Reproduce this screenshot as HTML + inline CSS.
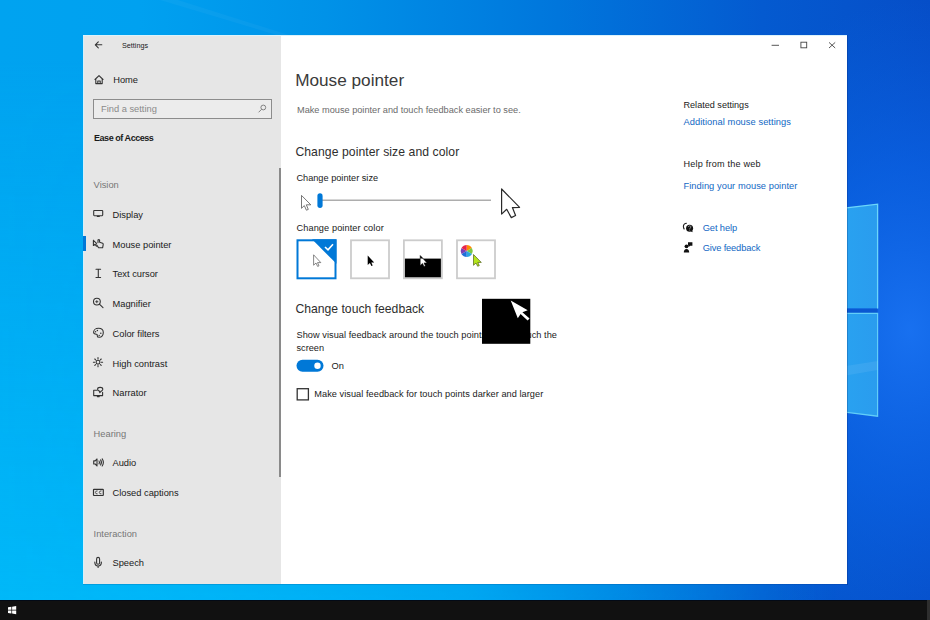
<!DOCTYPE html>
<html><head><meta charset="utf-8">
<style>
*{margin:0;padding:0;box-sizing:border-box}
html,body{width:930px;height:620px;overflow:hidden}
body{position:relative;font-family:"Liberation Sans",sans-serif;background:#0a6ad8}
#bg{position:absolute;left:0;top:0;width:930px;height:600px}
#taskbar{position:absolute;left:0;top:600px;width:930px;height:20px;background:#111111}
#win{position:absolute;left:83px;top:35px;width:764px;height:549px;background:#fff;overflow:hidden}
#nav{position:absolute;left:0;top:0;width:198.4px;height:549px;background:#e6e6e6}
.t{position:absolute;white-space:nowrap;line-height:1;font-size:9.3px;color:#1a1a1a}
.g{color:#767676}
.lk{color:#1268c4}
svg{position:absolute;overflow:visible}
</style></head><body>
<svg id="bg" width="930" height="600" viewBox="0 0 930 600">
 <defs>
  <linearGradient id="gh" x1="0" y1="0" x2="1" y2="0">
   <stop offset="0" stop-color="#00a3f0"/>
   <stop offset="0.15" stop-color="#00a1f0"/>
   <stop offset="0.35" stop-color="#0092e8"/>
   <stop offset="0.6" stop-color="#0076dc"/>
   <stop offset="0.82" stop-color="#045ad0"/>
   <stop offset="1" stop-color="#064ec8"/>
  </linearGradient>
  <linearGradient id="gv" x1="0" y1="0" x2="0" y2="1">
   <stop offset="0.1" stop-color="#00b8f8" stop-opacity="0"/>
   <stop offset="1" stop-color="#00b8f8" stop-opacity="1"/>
  </linearGradient>
  <linearGradient id="gvm" x1="0" y1="0" x2="1" y2="0">
   <stop offset="0" stop-color="#fff"/>
   <stop offset="0.5" stop-color="#fff" stop-opacity="0.7"/>
   <stop offset="0.75" stop-color="#fff" stop-opacity="0.25"/>
   <stop offset="0.9" stop-color="#fff" stop-opacity="0"/>
  </linearGradient>
  <mask id="mk"><rect width="930" height="600" fill="url(#gvm)"/></mask>
  <radialGradient id="glow" cx="0" cy="0" r="1" gradientUnits="userSpaceOnUse" gradientTransform="translate(910 330) scale(230 330)">
   <stop offset="0" stop-color="#1a74f4" stop-opacity="0.9"/>
   <stop offset="0.5" stop-color="#0c66ea" stop-opacity="0.6"/>
   <stop offset="1" stop-color="#0a60e0" stop-opacity="0"/>
  </radialGradient>
  <linearGradient id="pane" x1="0" y1="0" x2="1" y2="0">
   <stop offset="0" stop-color="#28a6f2"/>
   <stop offset="1" stop-color="#2a9cee"/>
  </linearGradient>
 </defs>
 <rect width="930" height="600" fill="url(#gh)"/>
 <rect width="930" height="600" fill="url(#gv)" mask="url(#mk)"/>
 <rect width="930" height="600" fill="url(#glow)"/>
 <path d="M160 0 L280 36 L292 36 L178 0 Z" fill="#fff" opacity="0.035"/>
 <path d="M820 211 L877.6 204.2 V308.4 H820 Z" fill="url(#pane)"/>
 <path d="M820 313.4 H877.6 V416.2 L820 409 Z" fill="url(#pane)"/>
 <rect x="820" y="308.6" width="57.6" height="4.6" fill="#0a58d2"/>
 <path d="M820 211 L877.6 204.2 V308.4" fill="none" stroke="#6cd6fa" stroke-width="1.3"/>
 <path d="M820 313.4 H877.6 V416.2 L820 409" fill="none" stroke="#62cef8" stroke-width="1.2"/>
 <path d="M820 370 L877.6 361 V370 L820 380 Z" fill="#fff" opacity="0.07"/>
</svg>
<div id="taskbar"><div style="position:absolute;left:0;top:0;width:930px;height:1px;background:#030a16"></div><div style="position:absolute;left:927px;top:0;width:3px;height:20px;background:#2e2e2e"></div></div>
<div id="win">
 <div id="nav"></div>
 <div style="position:absolute;left:0;top:0;width:1px;height:549px;background:#d4f0fb"></div>
 <div style="position:absolute;left:0;top:0;width:764px;height:1px;background:#dcf3fb"></div>
</div>
<div style="position:absolute;left:847px;top:35px;width:1px;height:550px;background:rgba(0,20,80,0.22)"></div>
<div style="position:absolute;left:83px;top:584px;width:765px;height:1px;background:rgba(0,30,90,0.15)"></div>
<!-- NAV -->
<div class="t" style="left:122px;top:41.5px;font-size:7.2px">Settings</div>
<div class="t" style="left:113.2px;top:76.1px">Home</div>
<div style="position:absolute;left:93px;top:99px;width:178.8px;height:20px;border:1.6px solid #8c8c8c;background:#ececec"></div>
<div class="t" style="left:101px;top:105.1px;color:#8a8a8a">Find a setting</div>
<div class="t" style="left:94px;top:134.1px;font-weight:bold;font-size:9px;letter-spacing:-0.45px">Ease of Access</div>
<div class="t g" style="left:93.6px;top:181.1px">Vision</div>
<div class="t" style="left:112.5px;top:210.9px">Display</div>
<div style="position:absolute;left:83px;top:236px;width:3px;height:15px;background:#0078d7"></div>
<div class="t" style="left:112.5px;top:240.9px">Mouse pointer</div>
<div class="t" style="left:112.5px;top:270.4px">Text cursor</div>
<div class="t" style="left:112.5px;top:300.1px">Magnifier</div>
<div class="t" style="left:112.5px;top:329.8px">Color filters</div>
<div class="t" style="left:112.5px;top:359.5px">High contrast</div>
<div class="t" style="left:112.5px;top:388.9px">Narrator</div>
<div class="t g" style="left:93.6px;top:430.1px">Hearing</div>
<div class="t" style="left:112.5px;top:459.2px">Audio</div>
<div class="t" style="left:112.5px;top:489.1px">Closed captions</div>
<div class="t g" style="left:93.6px;top:530.3px">Interaction</div>
<div class="t" style="left:112.5px;top:559.2px">Speech</div>
<div style="position:absolute;left:279px;top:168px;width:2px;height:309px;background:#8a8a8a"></div>


<!-- ICONS -->
<svg style="left:0;top:0" width="930" height="620" viewBox="0 0 930 620">
 <g fill="none" stroke="#333" stroke-width="1.1" stroke-linecap="round" stroke-linejoin="round">
  <!-- back arrow -->
  <path d="M95.3 44.8 H101.8 M95.3 44.8 L98.3 41.8 M95.3 44.8 L98.3 47.8"/>
  <!-- home -->
  <path d="M95 79.5 L99 75.6 L103 79.5 M95.8 78.8 V83.6 H102.2 V78.8 M97.8 83.6 V81 H100.2 V83.6"/>
  <!-- display -->
  <rect x="93.7" y="210.5" width="9" height="5.2" rx="0.6"/>
  <path d="M97.3 216.4 H99.3"/>
  <!-- mouse pointer (hand) -->
  <path d="M93.4 240.3 V245.5 L95.2 244.2 L96.4 246.2 M93.4 240.3 L96.6 243.4"/>
  <path d="M98 242.6 V240 Q98.9 239.2 99.6 240 V242.3 L102.6 243.2 Q103.4 243.6 103.2 244.6 L102.6 247.8 H98.6 L96.6 244.9"/>
  <!-- text cursor -->
  <path d="M96 269.3 H100.6 M98.3 269.3 V277.5 M96 277.5 H100.6"/>
  <!-- magnifier -->
  <circle cx="96.9" cy="301.6" r="3.4"/>
  <path d="M99.4 304.1 L103 307.6"/>
  <!-- color filters palette -->
  <path d="M98.5 328.3 C95.3 328.3 93.6 330.4 93.6 332.3 C93.6 334 95.3 334.2 96.3 334.2 C97.4 334.2 97.3 335.3 97.3 336 C97.3 337 98.3 337.3 99.2 337.3 C101.8 337.3 103.3 335 103.3 332.6 C103.3 330 101.3 328.3 98.5 328.3 Z"/>
  <!-- high contrast sun -->
  <circle cx="98" cy="362.2" r="1.9"/>
  <path d="M98 357.6 V358.9 M98 365.5 V366.8 M93.4 362.2 H94.7 M101.3 362.2 H102.6 M94.8 359 L95.6 359.8 M100.4 364.6 L101.2 365.4 M94.8 365.4 L95.6 364.6 M100.4 359.8 L101.2 359"/>
  <!-- narrator -->
  <path d="M96.8 390.3 H93.7 V395.6 H102.6 V392.3"/>
  <path d="M97.3 396.6 H99.3"/>
  <path d="M97.6 389.2 Q97.6 387.4 100.1 387.4 Q102.8 387.4 102.8 389.3 Q102.8 390.5 101.4 391 L99.8 392.6 L99.4 391 Q97.6 390.8 97.6 389.2 Z"/>
  <!-- audio -->
  <path d="M93.7 460.9 H95.2 L97 459 V465.9 L95.2 464 H93.7 Z"/>
  <path d="M99 461 Q100 462.4 99 463.9 M100.6 459.9 Q102.3 462.4 100.6 465 M102.2 458.9 Q104.6 462.4 102.2 466"/>
  <!-- speech mic -->
  <rect x="96.6" y="557.4" width="3" height="6.8" rx="1.5"/>
  <path d="M94.8 562 Q94.8 566 98.1 566 Q101.4 566 101.4 562 M98.1 566 V567.4"/>
 </g>
 <!-- closed captions -->
 <rect x="93.5" y="489.3" width="9.8" height="6.2" rx="0.5" fill="none" stroke="#333" stroke-width="1.2"/>
 <path d="M97.6 490.9 Q95.4 490.7 95.4 492.4 Q95.4 494.1 97.6 493.9 M101.5 490.9 Q99.3 490.7 99.3 492.4 Q99.3 494.1 101.5 493.9" fill="none" stroke="#444" stroke-width="0.9"/>
 <!-- palette dots -->
 <g fill="#333"><circle cx="97.4" cy="330.5" r="0.75"/><circle cx="95.6" cy="331.8" r="0.7"/><circle cx="100.8" cy="333.2" r="0.75"/><circle cx="99.2" cy="335.4" r="0.7"/></g>
 <!-- magnifier plus -->
 <path d="M95.3 301.7 H98.3 M96.8 300.2 V303.2" stroke="#333" stroke-width="0.9"/>
 <!-- display stand / narrator stand dots -->
 <!-- search icon -->
 <g fill="none" stroke="#777" stroke-width="0.9">
  <circle cx="263.3" cy="107.5" r="2.4"/>
  <path d="M261.6 109.3 L258.6 112.3"/>
 </g>
 <!-- title bar buttons -->
 <g fill="none" stroke="#444" stroke-width="0.9">
  <path d="M771.6 45.3 H779"/>
  <rect x="800.9" y="42.2" width="5.8" height="5.6"/>
  <path d="M829 42.4 L835.2 48 M835.2 42.4 L829 48"/>
 </g>
</svg>


<!-- WIDGETS -->
<svg style="left:0;top:0" width="930" height="620" viewBox="0 0 930 620">
 <!-- slider small cursor -->
 <path d="M301.5 195.4 V208.3 L304.3 205.6 L306.4 210.2 L308.3 209.4 L306.3 204.8 L310.8 204.8 Z" fill="#fff" stroke="#555" stroke-width="0.8" stroke-linejoin="round"/>
 <!-- slider track -->
 <rect x="322" y="199.6" width="169" height="1.2" fill="#999"/>
 <rect x="317.4" y="193.3" width="5.2" height="14.6" rx="2.6" fill="#0078d7"/>
 <!-- large cursor -->
 <path d="M501.6 189 V214.1 L506.7 209.3 L511.3 217.6 L515.6 215.5 L512.4 207.6 L519.6 207.3 Z" fill="#fff" stroke="#2a2a2a" stroke-width="1.2" stroke-linejoin="round"/>
 <!-- color boxes -->
 <rect x="297.5" y="240.3" width="38" height="38" fill="#fff" stroke="#0078d7" stroke-width="2"/>
 <path d="M312 239.3 H336.5 V263.8 Z" fill="#0078d7"/>
 <path d="M325 247 L328 249.8 L333 244.2" fill="none" stroke="#fff" stroke-width="1.6"/>
 <path d="M313.6 254.8 V265.2 L316 263 L317.6 266.4 L319 265.8 L317.5 262.6 L320.8 262.6 Z" fill="#fff" stroke="#555" stroke-width="0.7" stroke-linejoin="round"/>
 <rect x="351" y="240.3" width="38" height="38" fill="#fff" stroke="#cccccc" stroke-width="1.8"/>
 <path d="M367.7 255.5 V265 L369.9 263 L371.4 266 L372.7 265.4 L371.3 262.5 L374.2 262.5 Z" fill="#000"/>
 <rect x="403.9" y="240.3" width="38" height="38" fill="#fff" stroke="#cccccc" stroke-width="1.8"/>
 <rect x="404.9" y="258.6" width="36" height="18.7" fill="#000"/>
 <path d="M420.2 255.5 V265.5 L422.5 263.4 L424 266.5 L425.4 265.9 L424 262.9 L427 262.9 Z" fill="#fff" stroke="#000" stroke-width="0.5"/>
 <path d="M420.2 255.5 V258.6 L423.3 258.6 Z" fill="#000"/>
 <rect x="457" y="240.3" width="38" height="38" fill="#fff" stroke="#cccccc" stroke-width="1.8"/>
 <g transform="translate(466.7 251)">
  <path d="M0 0 L0 -6 A6 6 0 0 1 5.2 -3 Z" fill="#ff8c00"/>
  <path d="M0 0 L5.2 -3 A6 6 0 0 1 5.2 3 Z" fill="#7ac943"/>
  <path d="M0 0 L5.2 3 A6 6 0 0 1 0 6 Z" fill="#2ca6e0"/>
  <path d="M0 0 L0 6 A6 6 0 0 1 -5.2 3 Z" fill="#1e6fd9"/>
  <path d="M0 0 L-5.2 3 A6 6 0 0 1 -5.2 -3 Z" fill="#7b3fb5"/>
  <path d="M0 0 L-5.2 -3 A6 6 0 0 1 0 -6 Z" fill="#e8244a"/>
 </g>
 <path d="M473.5 254.5 V265.3 L476 263 L477.7 266.3 L479.3 265.6 L477.8 262.4 L481.3 262.4 Z" fill="#b5e61d" stroke="#3a4a00" stroke-width="0.6" stroke-linejoin="round"/>
 <!-- toggle -->
 <rect x="296.5" y="359.8" width="27" height="12" rx="6" fill="#0078d7"/>
 <circle cx="317.5" cy="365.8" r="3.2" fill="#fff"/>
 <!-- checkbox -->
 <rect x="297.2" y="388.7" width="11.2" height="11.2" fill="#fff" stroke="#333" stroke-width="1.3"/>
 <!-- get help icon -->
 <path d="M686.8 223.3 Q683.3 223.6 683.4 226.6 Q683.5 228.2 684.4 229.3" fill="none" stroke="#222" stroke-width="1.1"/>
 <circle cx="689.6" cy="228.2" r="3.5" fill="#111"/>
 <path d="M691.8 230.8 L693.2 232.2 L690.8 231.6 Z" fill="#111"/>
 <path d="M688.4 227 Q688.5 225.8 689.7 225.8 Q690.9 225.8 690.9 226.9 Q690.9 227.6 690 228.1 L689.7 228.9" fill="none" stroke="#aaa" stroke-width="0.8"/>
 <circle cx="689.7" cy="230.1" r="0.5" fill="#aaa"/>
 <!-- give feedback icon -->
 <circle cx="686.5" cy="246.3" r="1.9" fill="#111"/>
 <path d="M683.8 252.5 Q683.8 248.9 686.5 248.9 Q689.2 248.9 689.2 252.5 Z" fill="#111"/>
 <path d="M688 242.3 H692.4 V245.7 H690.2 L688.7 247 V245.7 H688 Z" fill="#111"/>
 <!-- taskbar start logo -->
 <g fill="#fff">
  <path d="M8 607.3 L11.4 606.8 V609.8 H8 Z"/>
  <path d="M12.1 606.7 L16.2 606.1 V609.8 H12.1 Z"/>
  <path d="M8 610.5 H11.4 V613.5 L8 613 Z"/>
  <path d="M12.1 610.5 H16.2 V614.2 L12.1 613.6 Z"/>
 </g>
</svg>

<!-- CONTENT -->
<div class="t" style="left:295.2px;top:72.1px;font-size:17.2px;color:#3a3a3a">Mouse pointer</div>
<div class="t g" style="left:297px;top:106.4px;font-size:9.2px;color:#6b6b6b">Make mouse pointer and touch feedback easier to see.</div>
<div class="t" style="left:295.4px;top:145.7px;font-size:12.2px;color:#2e2e2e;letter-spacing:0.07px">Change pointer size and color</div>
<div class="t" style="left:296.4px;top:174px;font-size:9.2px">Change pointer size</div>
<div class="t" style="left:296.5px;top:223.5px;font-size:9.2px;letter-spacing:0.1px">Change pointer color</div>
<div class="t" style="left:295.4px;top:302.9px;font-size:12.2px;color:#2e2e2e">Change touch feedback</div>
<div class="t" style="left:296.5px;top:331.2px;font-size:9.2px;letter-spacing:0.05px">Show visual feedback around the touch points when I touch the</div>
<div class="t" style="left:296.5px;top:343.5px;font-size:9.2px">screen</div>
<div class="t" style="left:331.5px;top:362px">On</div>
<div class="t" style="left:314.3px;top:390.3px;font-size:9.2px;letter-spacing:0.05px">Make visual feedback for touch points darker and larger</div>

<!-- RIGHT -->
<div class="t" style="left:683.5px;top:101px;font-size:9.1px">Related settings</div>
<div class="t lk" style="left:683.5px;top:118px;letter-spacing:0.06px">Additional mouse settings</div>
<div class="t" style="left:683.5px;top:160.2px;font-size:9.1px;letter-spacing:0.2px">Help from the web</div>
<div class="t lk" style="left:683.5px;top:181.8px;letter-spacing:0.05px">Finding your mouse pointer</div>
<div class="t lk" style="left:702.7px;top:224.1px;letter-spacing:-0.1px">Get help</div>
<div class="t lk" style="left:702.7px;top:244.4px;letter-spacing:-0.15px">Give feedback</div>
<svg style="left:0;top:0" width="930" height="620" viewBox="0 0 930 620">
 <rect x="482" y="298.8" width="48.3" height="45" fill="#000"/>
 <path d="M510.7 300.5 L527.7 310.2 L522.4 312.2 L529.6 318.6 L527.6 320.6 L520.6 314 L517.8 318.2 Z" fill="#fff"/>
</svg>
</body></html>
